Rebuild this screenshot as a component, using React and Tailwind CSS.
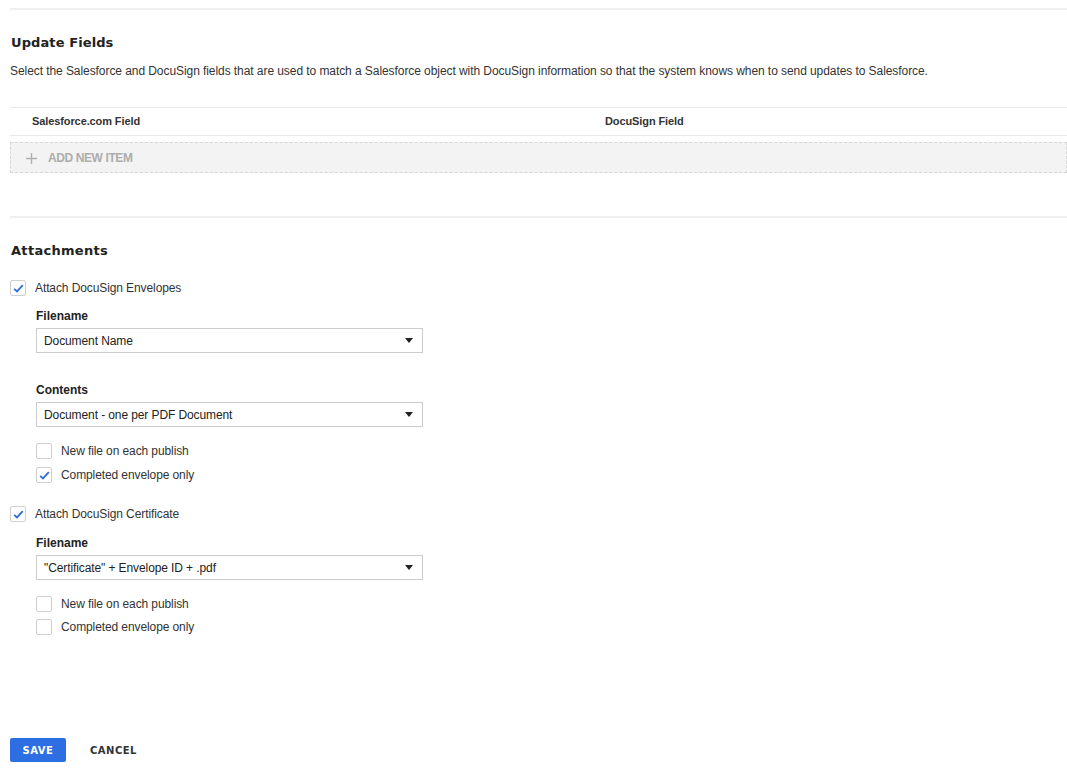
import React from "react";

const body = { fontFamily: '"Liberation Sans", Arial, sans-serif' };
const head = { fontFamily: '"DejaVu Sans", sans-serif' };

const Check = ({ checked }) => (
  <span className="w-4 h-4 border border-[#cfcfcf] rounded-[2px] bg-white flex items-center justify-center shrink-0">
    {checked && (
      <svg width="11" height="9" viewBox="0 0 11 9">
        <path d="M1.2 4.8 L4 7.4 L9.8 1.2" fill="none" stroke="#2f6fd9" strokeWidth="1.8" />
      </svg>
    )}
  </span>
);

const CheckRow = ({ checked, label, className = "" }) => (
  <div className={"flex items-center h-4 " + className}>
    <Check checked={checked} />
    <span className="ml-[9px] text-[12px] text-[#333] tracking-[-0.1px]">{label}</span>
  </div>
);

const Select = ({ value, className = "" }) => (
  <div
    className={
      "w-[387px] h-[25px] border border-[#cccccc] bg-white flex items-center justify-between pl-[7px] pr-[9px] text-[12px] text-[#222] tracking-[-0.1px] " +
      className
    }
  >
    <span>{value}</span>
    <svg width="8" height="5" viewBox="0 0 8 5">
      <path d="M0 0 H8 L4 5 Z" fill="#222" />
    </svg>
  </div>
);

const Label = ({ children, className = "" }) => (
  <div className={"text-[12px] leading-4 font-bold text-[#222] " + className}>{children}</div>
);

export default function App() {
  return (
    <div className="bg-white min-h-[775px] pl-[10px] pt-[8px]" style={body}>
      <div className="h-[2px] bg-[#efefef]" />

      {/* Update Fields */}
      <h2 className="mt-[23px] text-[13px] leading-5 font-bold text-[#222] pl-[1px] tracking-[0.1px]" style={head}>
        Update Fields
      </h2>
      <p className="mt-[10px] text-[12px] leading-4 text-[#333] tracking-[-0.07px]">
        Select the Salesforce and DocuSign fields that are used to match a Salesforce object with DocuSign information so that the system knows when to send updates to Salesforce.
      </p>

      <div className="mt-[28px] border-t border-b border-[#e8e8e8] h-[29px] flex items-center text-[11px] font-bold text-[#333] tracking-[-0.1px]">
        <div className="w-[595px] pl-[22px]">Salesforce.com Field</div>
        <div>DocuSign Field</div>
      </div>

      <div className="mt-[6px] h-[31px] border border-dashed border-[#d6d6d6] bg-[#f3f3f3] flex items-center pl-[15px]">
        <svg width="11" height="11" viewBox="0 0 11 11" className="mt-[2px]">
          <path d="M5.5 0 V11 M0 5.5 H11" stroke="#b0b0b0" strokeWidth="1.4" />
        </svg>
        <span className="ml-[11px] text-[12px] font-bold text-[#adadad] tracking-[-0.4px]">ADD NEW ITEM</span>
      </div>

      <div className="mt-[43px] h-[2px] bg-[#efefef]" />

      {/* Attachments */}
      <h2 className="mt-[23px] text-[13px] leading-5 font-bold text-[#222] pl-[1px] tracking-[0.3px]" style={head}>
        Attachments
      </h2>

      <CheckRow checked label="Attach DocuSign Envelopes" className="mt-[19px]" />
      <div className="pl-[26px]">
        <Label className="mt-[12px]">Filename</Label>
        <Select value="Document Name" className="mt-1" />
        <Label className="mt-[29px]">Contents</Label>
        <Select value="Document - one per PDF Document" className="mt-1" />
        <CheckRow label="New file on each publish" className="mt-[16px]" />
        <CheckRow checked label="Completed envelope only" className="mt-[8px]" />
      </div>

      <CheckRow checked label="Attach DocuSign Certificate" className="mt-[23px]" />
      <div className="pl-[26px]">
        <Label className="mt-[13px]">Filename</Label>
        <Select value={'"Certificate" + Envelope ID + .pdf'} className="mt-1" />
        <CheckRow label="New file on each publish" className="mt-[16px]" />
        <CheckRow label="Completed envelope only" className="mt-[7px]" />
      </div>

      <div className="mt-[103px] flex items-center" style={head}>
        <button className="w-[56px] h-6 bg-[#2d6ee3] rounded-[2px] text-white text-[10px] font-bold tracking-[0.5px]">
          SAVE
        </button>
        <button className="ml-[24px] text-[10px] font-bold text-[#333] tracking-[0.5px]">CANCEL</button>
      </div>
    </div>
  );
}
